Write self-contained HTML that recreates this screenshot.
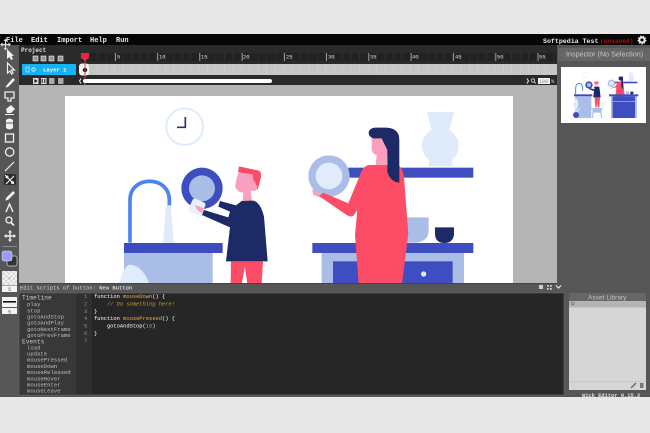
<!DOCTYPE html>
<html><head><meta charset="utf-8"><style>
html,body{margin:0;padding:0;width:650px;height:433px;overflow:hidden;background:#e8e8e8}
svg.root{display:block;filter:blur(.35px)}
text{font-family:"Liberation Mono","DejaVu Sans Mono",monospace;white-space:pre}
.m{font-size:7px;font-weight:bold;fill:#e8e8e8}
.s{font-size:5.6px;fill:#bcbcbc}
.h{font-size:6.2px;fill:#cacaca}
.c{font-size:5.4px;fill:#fff}
.n{font-size:5.4px;fill:#8c8c8c}
.i{fill:#f0f0f0}
</style></head><body>
<svg class="root" width="650" height="433" viewBox="0 0 650 433" xmlns="http://www.w3.org/2000/svg">
<defs>
<pattern id="fr" x="81" y="0" width="8.45" height="40" patternUnits="userSpaceOnUse"><rect width="8.45" height="40" fill="#c6c6c6"/><rect x="8" width=".5" height="40" fill="#d8d8d8"/></pattern>
<pattern id="ru" x="81" y="0" width="8.45" height="40" patternUnits="userSpaceOnUse"><rect width="8.45" height="40" fill="#222"/><rect x="8" width=".5" height="40" fill="#3c3c3c"/></pattern>
<pattern id="ck" width="5" height="5" patternUnits="userSpaceOnUse"><rect width="5" height="5" fill="#f4f4f4"/><rect width="2.5" height="2.5" fill="#d8d8d8"/><rect x="2.5" y="2.5" width="2.5" height="2.5" fill="#d8d8d8"/></pattern>
</defs>
<rect width="650" height="433" fill="#e8e8e8"/>
<rect y="34" width="650" height="363" fill="#565656"/>
<rect y="34" width="650" height="11" fill="#060606"/>
<text class="m" x="6" y="42">File</text><text class="m" x="31" y="42">Edit</text><text class="m" x="57" y="42">Import</text><text class="m" x="90" y="42">Help</text><text class="m" x="116" y="42">Run</text>
<text class="m" x="543" y="43" style="font-size:6.6px">Softpedia Test</text><text class="m" x="600" y="43" style="fill:#a01818;font-size:6.2px">(unsaved)</text>
<circle cx="642" cy="40" r="2.6" fill="none" stroke="#eee" stroke-width="2"/><circle cx="642" cy="40" r="4" fill="none" stroke="#eee" stroke-width="1" stroke-dasharray="1.4 1.4"/>
<!-- timeline -->
<rect x="19" y="45" width="538" height="40" fill="#2a2a2a"/>
<text x="21" y="52" style="font-size:6px;fill:#ddd;font-weight:bold">Project</text>
<g fill="#999" stroke="#eee" stroke-width=".6"><rect x="33" y="56" width="5" height="5"/><rect x="41" y="56" width="5" height="5"/><rect x="49" y="56" width="5" height="5"/><rect x="58" y="56" width="5" height="5"/></g>
<rect x="80" y="53" width="477" height="8" fill="url(#ru)"/>
<g fill="#ccc"><rect x="115" y="53" width=".7" height="8"/><rect x="157.4" y="53" width=".7" height="8"/><rect x="199.5" y="53" width=".7" height="8"/><rect x="241.8" y="53" width=".7" height="8"/><rect x="284" y="53" width=".7" height="8"/><rect x="326.2" y="53" width=".7" height="8"/><rect x="368.5" y="53" width=".7" height="8"/><rect x="410.8" y="53" width=".7" height="8"/><rect x="453.2" y="53" width=".7" height="8"/><rect x="495.5" y="53" width=".7" height="8"/><rect x="537.7" y="53" width=".7" height="8"/></g>
<g style="font-size:5.4px" fill="#ddd"><text x="117" y="58.5">5</text><text x="159" y="58.5">10</text><text x="201" y="58.5">15</text><text x="243" y="58.5">20</text><text x="286" y="58.5">25</text><text x="328" y="58.5">30</text><text x="370" y="58.5">35</text><text x="412" y="58.5">40</text><text x="455" y="58.5">45</text><text x="497" y="58.5">50</text><text x="539" y="58.5">55</text></g>
<rect x="22" y="64" width="54" height="11" fill="#15b3f4"/>
<text x="43" y="71.5" style="font-size:5.6px;fill:#e8fbff;font-weight:bold">Layer 1</text>
<rect x="26" y="67" width="3" height="5" fill="none" stroke="#bdeeff" stroke-width=".7"/><circle cx="33.5" cy="69.5" r="1.7" fill="none" stroke="#dff" stroke-width=".8"/>
<rect x="80" y="64" width="477" height="11" fill="url(#fr)"/>
<rect x="79" y="63.5" width="10" height="12" rx="3" fill="#f4f4f4"/>
<circle cx="85" cy="70" r="2.2" fill="#111"/>
<path d="M81 53H89V58L85 61L81 58Z" fill="#e0283a"/><rect x="84.5" y="58" width="1" height="27" fill="#d84050"/>
<g fill="#ddd"><rect x="33" y="78" width="5.5" height="6"/><rect x="41" y="78" width="5.5" height="6"/><rect x="49" y="78" width="5.5" height="6" fill="#aaa"/><rect x="58" y="78" width="5.5" height="6" fill="#aaa"/></g>
<path d="M34.5 79L37.5 81L34.5 83Z" fill="#111"/><path d="M42.2 79V83M44.8 79V83" stroke="#111" stroke-width="1"/>
<path d="M81 78.5L79.5 81L81 83.5" fill="none" stroke="#eee" stroke-width="1"/>
<rect x="83" y="79" width="189" height="4" rx="2" fill="#fff"/>
<path d="M527 78.5L528.5 81L527 83.5" fill="none" stroke="#eee" stroke-width="1"/>
<circle cx="533" cy="80.5" r="1.7" fill="none" stroke="#ddd" stroke-width=".8"/><path d="M534.2 81.8L536 83.5" stroke="#ddd" stroke-width=".8"/>
<rect x="538" y="78" width="12" height="6" fill="#f4f4f4"/><text x="539" y="83" style="font-size:5px;fill:#888">100</text><text x="551" y="83" style="font-size:5.5px;fill:#ddd">%</text>
<!-- canvas -->
<rect x="19" y="85" width="538" height="198" fill="#b5b5b5"/>
<rect x="65" y="96" width="448" height="187" fill="#fff"/>
<svg x="65" y="96" width="448" height="187" viewBox="65 96 448 187">
<g transform="translate(110 100) scale(.3333)">
<circle cx="224" cy="80" r="55" fill="none" stroke="#e0ebfb" stroke-width="6"/>
<path d="M226 51V82H201" fill="none" stroke="#2a3766" stroke-width="5"/>
<path d="M60 428V300C60 225 178 225 178 300V316" fill="none" stroke="#4a85f0" stroke-width="11"/>
<path d="M168 316H183L191 430H159Z" fill="#dfeafa"/>
<rect x="42" y="429" width="296" height="30" fill="#3c4cbf"/>
<rect x="42" y="459" width="266" height="96" fill="#aabde6"/>
<path d="M28 552Q40 495 62 494Q100 500 118 552Z" fill="#e0ebfb"/>
<circle cx="276" cy="265" r="62" fill="#3e4dbf"/><circle cx="276" cy="265" r="39" fill="#aabde6"/>
<path d="M387 215Q375 245 376 262Q385 278 400 278L398 303H426L422 272Q440 276 445 262L428 225Z" fill="#fb9fbf"/>
<path d="M387 199L447 212Q456 218 452 236L443 270Q440 250 430 240L428 224L384 216Z" fill="#fd4c65"/>
<path d="M330 303L378 316L395 303L430 302Q452 308 462 350L473 484H348L360 382L276 345L282 330L355 352L360 335L325 320Z" fill="#1c2a66"/>
<path d="M363 484H459L455 552H412L405 500L395 552H362Z" fill="#fd4c65"/>
<rect x="240" y="300" width="42" height="42" rx="7" transform="rotate(25 261 321)" fill="#e8f0fc"/>
<path d="M255 315L282 325L276 340L262 330Z" fill="#fb9fbf"/>
</g>
<g transform="translate(300 100) scale(.3333)">
<rect x="145" y="203" width="375" height="30" fill="#3e4dbf"/>
<path d="M381 36H462L448 90Q476 110 476 135Q476 165 455 180L458 198H385L388 180Q366 165 366 135Q366 110 395 90Z" fill="#dfeafa"/>
<rect x="37" y="429" width="483" height="30" fill="#3e4dbf"/>
<rect x="65" y="459" width="427" height="96" fill="#aabde6"/>
<rect x="99" y="484" width="359" height="70" fill="#3e4dbf"/>
<circle cx="371" cy="522" r="8" fill="#e0ebfb"/>
<path d="M315 352H386V395Q382 428 340 428H315Z" fill="#aabde6"/>
<path d="M405 382H462V405Q458 429 433 429Q408 429 405 405Z" fill="#1c2a66"/>
<path d="M36 268L65 280L60 292L40 285Z" fill="#fb9fbf"/>
<circle cx="87" cy="228" r="62" fill="#aabde6"/><circle cx="87" cy="228" r="40" fill="#e0ebfb"/>
<path d="M215 112V150Q220 165 230 165L227 200H260L265 115Z" fill="#fb9fbf"/>
<path d="M210 195H290Q305 195 312 230L325 400L306 552H176L165 405L172 330L160 348Q150 352 140 345L57 288L70 278L145 310L180 225Q190 195 210 195Z" fill="#fd4c65"/>
<path d="M225 83H260Q298 85 298 120V248Q270 245 262 215V150L245 115H220Q205 110 206 97Q208 85 225 83Z" fill="#1c2a66"/>
</g>
</svg>
<!-- toolbar -->
<rect x="0" y="45" width="19" height="352" fill="#565656"/>
<path d="M7 49V59L9.5 57L11 60L13 59L11.5 56H14Z" class="i"/>
<path d="M5.5 40V49M1 44.5H10" stroke="#ddd" stroke-width="1.2"/><path d="M5.5 38.5L3.5 41H7.5ZM5.5 50.5L3.5 48H7.5ZM0 44.5L2.5 42.500V46.500ZM11 44.5L8.5 42.5V46.5Z" fill="#ddd"/>
<path d="M7.5 63V73L10 71L11.5 74L13 73L11.5 70H14.5Z" fill="none" stroke="#f0f0f0" stroke-width="1.2"/>
<path d="M6 86L13 78L15 80L8 87L5.5 87.5Z" class="i"/>
<path d="M5 92H14V98H11V101H8V98H5Z" fill="none" stroke="#eee" stroke-width="1.3"/>
<path d="M6 109L11 105L15 109L11 113H7Z" class="i"/><path d="M5 114.5H14" stroke="#eee"/>
<path d="M6 120Q9.5 117 13 120V128Q9.5 131 6 128Z" class="i"/><path d="M6 123H13" stroke="#555"/>
<rect x="5.5" y="134" width="8" height="8" fill="none" stroke="#f0f0f0" stroke-width="1.3"/>
<circle cx="9.7" cy="152" r="4.2" fill="none" stroke="#f0f0f0" stroke-width="1.3"/>
<path d="M5 171L14 162" stroke="#f0f0f0" stroke-width="1.2"/>
<rect x="4" y="174" width="12" height="11" rx="1.5" fill="#2a2a2a"/>
<path d="M5 175L14 184M14 176L6 184" stroke="#eee" stroke-width="1.2"/><circle cx="7" cy="177" r="1.5" class="i"/><circle cx="12.5" cy="182.5" r="1.5" class="i"/>
<path d="M6 198L13 191L15 193L8 200L5.5 200.5Z" class="i"/>
<path d="M6 212L9.5 204L13 212" fill="none" stroke="#f0f0f0" stroke-width="1.4"/>
<circle cx="9" cy="220" r="3" fill="none" stroke="#f0f0f0" stroke-width="1.3"/><path d="M11 222.5L14 225.5" stroke="#f0f0f0" stroke-width="1.6"/>
<path d="M10 231V241M5 236H15" stroke="#f0f0f0" stroke-width="1.4"/><path d="M10 230L8 232.5H12ZM10 242L8 239.5H12ZM4 236L6.5 234V238ZM16 236L13.5 234V238Z" class="i"/>
<rect x="2" y="246" width="15" height=".8" fill="#999"/>
<rect x="7" y="256" width="10" height="10" rx="2" fill="#333" stroke="#ddd" stroke-width=".7"/>
<rect x="2" y="251" width="10" height="10" rx="2" fill="#9a9cff" stroke="#ddd" stroke-width=".5"/>
<rect x="2" y="271" width="15" height="14" fill="url(#ck)"/><circle cx="9.5" cy="278" r=".8" fill="#7d80ff"/>
<rect x="2" y="285.5" width="15" height="6.5" fill="#f4f4f4"/><text x="8" y="291" style="font-size:5.5px;fill:#666">5</text>
<rect x="2" y="297" width="15" height="10" fill="#f4f4f4"/><rect x="3" y="301" width="13" height="1.6" fill="#111"/>
<rect x="2" y="308" width="15" height="6" fill="#f4f4f4"/><text x="8" y="313.5" style="font-size:5.5px;fill:#666">5</text>
<!-- right panel -->
<rect x="557" y="45" width="93" height="352" fill="#565656"/>
<rect x="558" y="48" width="92" height="13" fill="#666"/>
<text x="566" y="56.5" style="font-family:'Liberation Sans',sans-serif;font-size:7.2px;fill:#c8c8c8">Inspector (No Selection)</text>
<rect x="561" y="67" width="85" height="56" fill="#fff"/>
<g transform="translate(430 30) scale(.3333)">
<circle cx="466" cy="135" r="8" fill="none" stroke="#dde8fa" stroke-width="1.5"/>
<path d="M437 193V175C437 155 458 155 458 175V182" fill="none" stroke="#4a85f0" stroke-width="3"/>
<rect x="432" y="193" width="55" height="6" fill="#3c4cbf"/>
<rect x="436" y="199" width="48" height="65" fill="#aabde6"/>
<path d="M440 205Q450 220 440 240L428 225ZM438 245L455 228L440 250Z" fill="#e0ebfb"/>
<circle cx="438" cy="255" r="9" fill="#3e4dbf"/>
<circle cx="477" cy="165" r="11" fill="#3e4dbf"/><circle cx="477" cy="165" r="6" fill="#aabde6"/>
<circle cx="499" cy="161" r="6" fill="#fb9fbf"/><path d="M493 155H506V160H493Z" fill="#fd4c65"/>
<path d="M492 170H508L512 202H490L492 183L478 178V174L494 178Z" fill="#1c2a66"/>
<path d="M494 202H510L508 232H503L502 212L500 232H496Z" fill="#fd4c65"/>
<path d="M484 234H518V238H514L516 264H513L511 248H491L489 264H486L488 238H484Z" fill="#aabde6"/>
<rect x="545" y="155" width="77" height="5" fill="#3e4dbf"/>
<path d="M597 128H610L608 136Q613 142 611 148L609 153H598L596 148Q594 142 599 136Z" fill="#dfeafa"/>
<circle cx="544" cy="160" r="11" fill="#aabde6"/><circle cx="544" cy="160" r="7" fill="#e0ebfb"/>
<circle cx="572" cy="146" r="6" fill="#1c2a66"/>
<path d="M565 156H580L587 228L580 226H560L557 195L559 172L538 176L555 170Z" fill="#fd4c65"/>
<path d="M566 140H579V178L574 170V150Z" fill="#1c2a66"/>
<path d="M565 228H570L568 264H565ZM576 228H581L584 264H580Z" fill="#fb9fbf"/>
<rect x="587" y="184" width="10" height="9" fill="#aabde6"/><rect x="601" y="185" width="9" height="8" fill="#1c2a66"/>
<rect x="537" y="193" width="88" height="6" fill="#3e4dbf"/>
<rect x="543" y="199" width="77" height="65" fill="#3e4dbf"/><rect x="543" y="199" width="5" height="65" fill="#aabde6"/><rect x="615" y="199" width="5" height="65" fill="#aabde6"/><rect x="548" y="213" width="67" height="2" fill="#aabde6"/>
<rect x="418" y="265" width="215" height="1" fill="#e6eefa"/>
</g>
<rect x="569" y="293" width="77" height="97" fill="#d6d6d6"/>
<rect x="569" y="293" width="77" height="8" fill="#666"/>
<text x="588" y="299.5" style="font-family:'Liberation Sans',sans-serif;font-size:6.6px;fill:#c4c4c4">Asset Library</text>
<rect x="569" y="301" width="77" height="6.5" fill="#b4b4b4"/>
<circle cx="572.8" cy="303.5" r="1.3" fill="none" stroke="#666" stroke-width=".6"/>
<rect x="569" y="381.5" width="77" height=".6" fill="#bbb"/>
<path d="M631 388L636 383" stroke="#666" stroke-width="1.3"/><rect x="640" y="383" width="3.5" height="5" fill="#777"/>
<text x="582" y="396.800" style="font-size:5.4px;fill:#e0e0e0;font-weight:bold">Wick Editor 0.15.2</text>
<!-- script -->
<rect x="19" y="283" width="550" height="10" fill="#565656"/>
<rect x="19" y="283" width="538" height="1" fill="#444"/>
<text x="20" y="289.5" style="font-size:5.5px;fill:#d4d4d4">Edit scripts of button: <tspan style="font-weight:bold">New Button</tspan></text>
<g fill="#cfcfcf"><rect x="539" y="285" width="4" height="4"/><rect x="547" y="285" width="1.8" height="1.8"/><rect x="550" y="285" width="1.8" height="1.8"/><rect x="547" y="288" width="1.8" height="1.8"/><rect x="550" y="288" width="1.8" height="1.8"/></g>
<path d="M556 285.5L558.5 288L561 285.5" fill="none" stroke="#eee" stroke-width="1.2"/>
<rect x="19" y="293" width="545" height="102" fill="#262626" stroke="#6a6a6a" stroke-width=".6"/>
<rect x="19.5" y="293.5" width="57" height="101" fill="#383838"/>
<rect x="76" y="293.5" width="16" height="101" fill="#2f2f2f"/>
<text class="h" x="22" y="299.5">Timeline</text>
<text class="s" x="27" y="306">play</text><text class="s" x="27" y="312.3">stop</text><text class="s" x="27" y="318.5">gotoAndStop</text><text class="s" x="27" y="324.7">gotoAndPlay</text><text class="s" x="27" y="330.8">gotoNextFrame</text><text class="s" x="27" y="337">gotoPrevFrame</text>
<text class="h" x="22" y="343.3">Events</text>
<text class="s" x="27" y="349.3">load</text><text class="s" x="27" y="355.5">update</text><text class="s" x="27" y="361.7">mousePressed</text><text class="s" x="27" y="368">mouseDown</text><text class="s" x="27" y="374">mouseReleased</text><text class="s" x="27" y="380.3">mouseHover</text><text class="s" x="27" y="386.4">mouseEnter</text><text class="s" x="27" y="392.5">mouseLeave</text>
<text class="n" x="84" y="298">1</text><text class="n" x="84" y="305.4">2</text><text class="n" x="84" y="312.8">3</text><text class="n" x="84" y="320">4</text><text class="n" x="84" y="327.5">5</text><text class="n" x="84" y="334.8">6</text><text class="n" x="84" y="342">7</text>
<text class="c" x="94" y="298">function <tspan fill="#f0b040">mouseDown</tspan>() {</text>
<text class="c" x="94" y="305.4" style="fill:#c89a30;font-style:italic">    // Do something here!</text>
<text class="c" x="94" y="312.8">}</text>
<text class="c" x="94" y="320">function <tspan fill="#f0b040">mousePressed</tspan>() {</text>
<text class="c" x="94" y="327.5">    gotoAndStop(<tspan fill="#7aa0f0">16</tspan>)</text>
<text class="c" x="94" y="334.8">}</text>
<rect y="397" width="650" height="36" fill="#e8e8e8"/>
</svg>
</body></html>
